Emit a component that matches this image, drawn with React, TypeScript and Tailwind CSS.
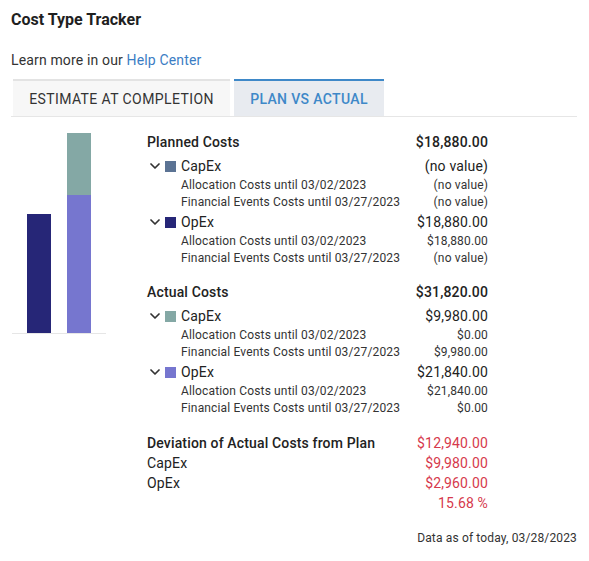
import React from "react";

const FONT = "font-['Roboto',_'Liberation_Sans',_sans-serif]";

type Sub = { label: string; value: string };
type Item = { name: string; color: string; value: string; subs: Sub[] };

const planned: Item[] = [
  {
    name: "CapEx",
    color: "bg-[#5b7394]",
    value: "(no value)",
    subs: [
      { label: "Allocation Costs until 03/02/2023", value: "(no value)" },
      { label: "Financial Events Costs until 03/27/2023", value: "(no value)" },
    ],
  },
  {
    name: "OpEx",
    color: "bg-[#262677]",
    value: "$18,880.00",
    subs: [
      { label: "Allocation Costs until 03/02/2023", value: "$18,880.00" },
      { label: "Financial Events Costs until 03/27/2023", value: "(no value)" },
    ],
  },
];

const actual: Item[] = [
  {
    name: "CapEx",
    color: "bg-[#84a8a5]",
    value: "$9,980.00",
    subs: [
      { label: "Allocation Costs until 03/02/2023", value: "$0.00" },
      { label: "Financial Events Costs until 03/27/2023", value: "$9,980.00" },
    ],
  },
  {
    name: "OpEx",
    color: "bg-[#7676cf]",
    value: "$21,840.00",
    subs: [
      { label: "Allocation Costs until 03/02/2023", value: "$21,840.00" },
      { label: "Financial Events Costs until 03/27/2023", value: "$0.00" },
    ],
  },
];

const Chevron = () => (
  <svg width="10" height="6" viewBox="0 0 10 6" className="text-[#333]">
    <path d="M1 1l4 4 4-4" fill="none" stroke="currentColor" strokeWidth="1.7" strokeLinecap="round" strokeLinejoin="round" />
  </svg>
);

const Group: React.FC<{ title: string; total: string; items: Item[] }> = ({ title, total, items }) => (
  <div>
    <div className="flex h-[24px] items-center justify-between text-sm font-medium text-[#222]">
      <span>{title}</span>
      <span>{total}</span>
    </div>
    {items.map((it) => (
      <div key={it.name} className="mt-[2px]">
        <div className="flex h-[20px] items-center justify-between text-sm text-[#222]">
          <div className="flex items-center">
            <div className="flex w-[18px] items-center pl-[3px]">
              <Chevron />
            </div>
            <div className={`h-[11px] w-[11px] ${it.color}`} />
            <span className="ml-[5px]">{it.name}</span>
          </div>
          <span>{it.value}</span>
        </div>
        {it.subs.map((s) => (
          <div key={s.label} className="flex h-[17px] items-center justify-between text-xs text-[#333]">
            <span className="pl-[34px]">{s.label}</span>
            <span>{s.value}</span>
          </div>
        ))}
      </div>
    ))}
  </div>
);

const App: React.FC = () => {
  return (
    <div className={`${FONT} min-h-screen bg-white px-[11px] pb-4 pt-[10px] tracking-[0.15px] text-[#222]`}>
      <h1 className="h-[20px] text-base font-bold leading-[20px] tracking-normal text-[#1f1f1f]">Cost Type Tracker</h1>

      <p className="mt-[20px] h-[20px] text-sm leading-[20px] text-[#333]">
        Learn more in our <span className="text-[#3b7dc4]">Help Center</span>
      </p>

      {/* Tabs */}
      <div className="mt-[9px] mr-[1px] flex border-b border-[#e6e6e6]">
        <div className="ml-[2px] flex h-[37px] w-[217px] items-center justify-center whitespace-nowrap border-t-2 border-[#e3e3e3] bg-[#f7f7f7] text-sm tracking-[0.4px] text-[#333]">
          ESTIMATE AT COMPLETION
        </div>
        <div className="ml-[4px] flex h-[37px] w-[150px] items-center justify-center whitespace-nowrap border-t-2 border-[#3e88c8] bg-[#e8ebf0] text-sm font-medium tracking-[0.35px] text-[#3e88c8]">
          PLAN VS ACTUAL
        </div>
      </div>

      <div className="flex">
        {/* Chart */}
        <div className="ml-[1px] w-[94px] pt-[16px]">
          <div className="flex h-[201px] items-end gap-[16px] border-b border-[#e6e6e6] pl-[15px]">
            <div className="h-[119px] w-[24px] bg-[#262677]" />
            <div className="flex w-[24px] flex-col">
              <div className="h-[62px] bg-[#84a8a5]" />
              <div className="h-[138px] bg-[#7676cf]" />
            </div>
          </div>
        </div>

        {/* Table */}
        <div className="ml-[41px] w-[341px] pt-[13px]">
          <Group title="Planned Costs" total="$18,880.00" items={planned} />
          <div className="mt-[14px]">
            <Group title="Actual Costs" total="$31,820.00" items={actual} />
          </div>

          <div className="mt-[17px] text-sm">
            <div className="flex h-[20px] items-center justify-between">
              <span className="font-medium text-[#222]">Deviation of Actual Costs from Plan</span>
              <span className="text-[#d6394c]">$12,940.00</span>
            </div>
            <div className="flex h-[20px] items-center justify-between">
              <span>CapEx</span>
              <span className="text-[#d6394c]">$9,980.00</span>
            </div>
            <div className="flex h-[20px] items-center justify-between">
              <span>OpEx</span>
              <span className="text-[#d6394c]">$2,960.00</span>
            </div>
            <div className="flex h-[20px] items-center justify-end">
              <span className="text-[#d6394c]">15.68 %</span>
            </div>
          </div>
        </div>
      </div>

      <div className="mt-[15px] mr-[1px] flex h-[20px] items-center justify-end text-xs text-[#333]">
        Data as of today, 03/28/2023
      </div>
    </div>
  );
};

export default App;
